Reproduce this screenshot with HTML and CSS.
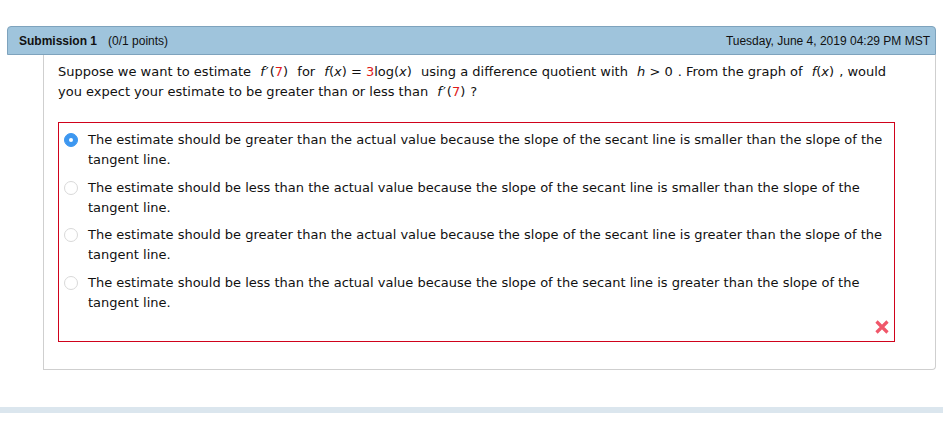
FILE: index.html
```html
<!DOCTYPE html>
<html>
<head>
<meta charset="utf-8">
<link rel="stylesheet" href="styles.css">
</head>
<body>
<div class="page">
  <div class="header">
    <div class="head-left"><span class="sub">Submission 1</span><span class="pts">(0/1 points)</span></div>
    <div class="head-right">Tuesday, June 4, 2019 04:29 PM MST</div>
  </div>
  <div class="content">
    <p class="question">Suppose we want to estimate <span class="m"><i>f</i><span class="pr">&#8242;</span>(<span class="red">7</span>)</span> for <span class="m"><i>f</i>(<i>x</i>) = <span class="red">3</span>log(<i>x</i>)</span> using a difference quotient with <span class="m"><i>h</i> &gt; 0</span>. From the graph of <span class="m"><i>f</i>(<i>x</i>)</span>, would you expect your estimate to be greater than or less than <span class="m"><i>f</i><span class="pr">&#8242;</span>(<span class="red">7</span>)</span>?</p>
    <div class="answers">
      <div class="opt"><span class="radio checked"></span><span class="otext">The estimate should be greater than the actual value because the slope of the secant line is smaller than the slope of the tangent line.</span></div>
      <div class="opt"><span class="radio"></span><span class="otext">The estimate should be less than the actual value because the slope of the secant line is smaller than the slope of the tangent line.</span></div>
      <div class="opt"><span class="radio"></span><span class="otext">The estimate should be greater than the actual value because the slope of the secant line is greater than the slope of the tangent line.</span></div>
      <div class="opt"><span class="radio"></span><span class="otext">The estimate should be less than the actual value because the slope of the secant line is greater than the slope of the tangent line.</span></div>
      <div class="mark"><svg width="14" height="14" viewBox="0 0 14 14"><path d="M1.5 1.5 L12.5 12.5 M12.5 1.5 L1.5 12.5" stroke="#f0576a" stroke-width="3.2" stroke-linecap="butt"/></svg></div>
    </div>
  </div>
  <div class="strip"></div>
</div>
</body>
</html>
```
FILE: styles.css
```css
html, body {
  margin: 0;
  padding: 0;
  background: #ffffff;
}
.page {
  padding-top: 26px;
  font-family: "DejaVu Sans", Verdana, sans-serif;
  color: #111;
}
.header {
  margin: 0 7px;
  height: 27px;
  background: #9fc4dc;
  border: 1px solid #7ea3bd;
  border-radius: 4px 4px 0 0;
  display: flex;
  justify-content: space-between;
  align-items: center;
  padding: 0 5px 0 11px;
  font-family: "Liberation Sans", Arial, sans-serif;
  font-size: 12px;
  color: #111;
}
.sub {
  font-weight: bold;
  margin-right: 11px;
}
.content {
  margin: 0 7px 0 43px;
  border: 1px solid #cfcfcf;
  border-top: none;
  border-radius: 0 0 4px 0;
  padding: 7px 34px 27px 14px;
}
.question {
  margin: 0;
  font-size: 13px;
  line-height: 20px;
}
.m {
  margin: 0 5px;
}
.m i {
  font-family: "DejaVu Sans", sans-serif;
}
.pr {
  padding: 0 1px;
}
.red {
  color: #e01b1b;
}
.answers {
  margin: 20px 6px 0 0;
  border: 1px solid #d0021b;
  padding: 7px 8px 7px 5px;
  display: flex;
  flex-direction: column;
  gap: 7.5px;
}
.opt {
  display: flex;
  align-items: flex-start;
  font-size: 13px;
  line-height: 20px;
}
.radio {
  flex: none;
  width: 12px;
  height: 12px;
  border: 1px solid #d9d9d9;
  border-radius: 50%;
  margin: 3px 10px 0 0;
  background: #fff;
  box-sizing: content-box;
  position: relative;
}
.radio.checked {
  background: #3d97f0;
  border-color: #3d97f0;
}
.radio.checked::after {
  content: "";
  position: absolute;
  left: 4px;
  top: 4px;
  width: 4px;
  height: 4px;
  border-radius: 50%;
  background: #fff;
}
.mark {
  display: flex;
  justify-content: flex-end;
  margin-top: 0;
  margin-right: -3px;
  height: 14px;
}
.strip {
  margin-top: 37px;
  height: 6px;
  background: #dbe6ee;
}
```
